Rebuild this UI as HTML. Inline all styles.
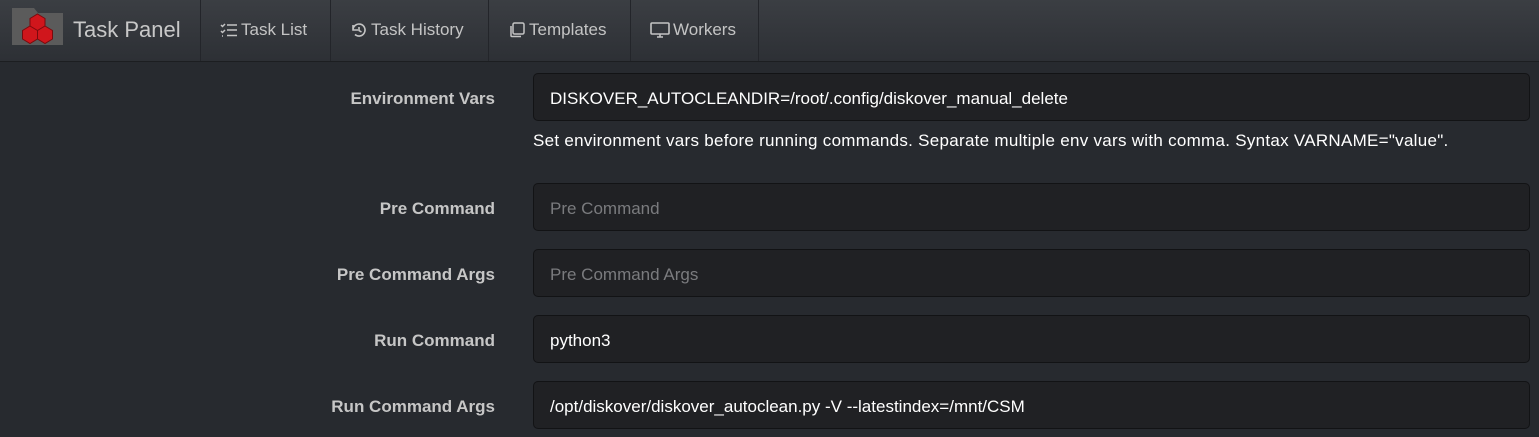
<!DOCTYPE html>
<html><head><meta charset="utf-8"><style>
*{box-sizing:border-box;margin:0;padding:0}
body{width:1539px;height:437px;overflow:hidden;background:#272a2f;font-family:"Liberation Sans",Arial,sans-serif;}
.nav{position:absolute;left:0;top:0;width:1539px;height:62px;background:linear-gradient(#3b3e43,#2d3035);border-bottom:1px solid #1c1e21}
.logo{position:absolute;left:12px;top:8px;width:51px;height:37px}
.brand{position:absolute;left:73px;top:17px;font-size:22px;color:#c8c8c8}
.item{position:absolute;top:0;height:61px;border-left:1px solid #23252a;color:#c4c4c4;font-size:17px;line-height:60px;padding-left:19px}
.item svg{vertical-align:-3px;margin-right:3px}
.lbl{position:absolute;right:1044px;font-weight:bold;font-size:17px;color:#c6c6c6}
.in{position:absolute;left:533px;width:997px;height:48px;background:#202124;border:1px solid #121315;border-radius:5px;font-size:17px;color:#fff;padding-left:16px;line-height:50px}
.ph{color:#7a7b7e}
.help{position:absolute;left:533px;top:131px;font-size:17px;color:#fff;letter-spacing:0.28px}
</style></head><body>
<div class="nav">
 <div class="logo">
  <svg width="51" height="37" viewBox="0 0 51 37"><path d="M0 0H22L26 5H51V37H0Z" fill="#5b5b5b"/>
  <g fill="#d0161c" stroke="#7a0a0e" stroke-width="1"><polygon points="25.5,6 33,10.5 33,19 25.5,23.5 18,19 18,10.5"/><polygon points="18,18 25.5,22.5 25.5,31 18,35.5 10.5,31 10.5,22.5"/><polygon points="33,18 40.5,22.5 40.5,31 33,35.5 25.5,31 25.5,22.5"/></g></svg>
 </div>
 <div class="brand">Task Panel</div>
 <div class="item" style="left:200px;width:130px"><svg width="18" height="16" viewBox="0 0 18 16" fill="none" stroke="#c4c4c4" stroke-width="1.5"><path d="M1 3l1.5 1.5L5 2M1 9l1.5 1.5L5 8M2 14h1M7 3h10M7 8h10M7 13.5h10"/></svg>Task List</div>
 <div class="item" style="left:330px;width:158px"><svg width="18" height="16" viewBox="0 0 18 16" fill="none" stroke="#c4c4c4" stroke-width="1.6"><path d="M3 8a6 6 0 1 1 2 4.5M3 3v5h5"/><path d="M9 5v3.5l2.5 1.5"/></svg>Task History</div>
 <div class="item" style="left:488px;width:142px"><svg width="18" height="16" viewBox="0 0 18 16" fill="none" stroke="#c4c4c4" stroke-width="1.5"><rect x="5" y="1" width="11" height="11" rx="1.5"/><path d="M3 4v9.5a1 1 0 0 0 1 1h9"/></svg>Templates</div>
 <div class="item" style="left:630px;width:129px;border-right:1px solid #23252a"><svg width="20" height="16" viewBox="0 0 20 16" fill="none" stroke="#c4c4c4" stroke-width="1.6"><rect x="1" y="1" width="18" height="11" rx="1"/><path d="M7 15h6M10 12v3"/></svg>Workers</div>
</div>

<div class="lbl" style="top:89px">Environment Vars</div>
<div class="in" style="top:73px">DISKOVER_AUTOCLEANDIR=/root/.config/diskover_manual_delete</div>
<div class="help">Set environment vars before running commands. Separate multiple env vars with comma. Syntax VARNAME="value".</div>

<div class="lbl" style="top:199px">Pre Command</div>
<div class="in ph" style="top:183px">Pre Command</div>

<div class="lbl" style="top:265px">Pre Command Args</div>
<div class="in ph" style="top:249px">Pre Command Args</div>

<div class="lbl" style="top:331px">Run Command</div>
<div class="in" style="top:315px">python3</div>

<div class="lbl" style="top:397px">Run Command Args</div>
<div class="in" style="top:381px">/opt/diskover/diskover_autoclean.py -V --latestindex=/mnt/CSM</div>
</body></html>
